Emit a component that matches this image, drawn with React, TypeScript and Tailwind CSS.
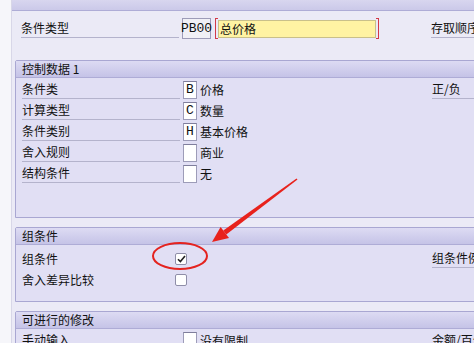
import React from "react";

const font = { fontFamily: '"Noto Sans CJK SC", "Noto Sans", sans-serif' };
const mono = { fontFamily: '"Liberation Mono", "DejaVu Sans Mono", monospace' };

function Label({ text, w = "w-[158px]", line = true }: { text: string; w?: string; line?: boolean }) {
  return (
    <div className={`${w} h-[18px] flex items-center shrink-0 ${line ? "border-b border-[#b4b3cc]" : ""}`}>
      <span className="text-[12px] leading-none text-[#111]">{text}</span>
    </div>
  );
}

function CharBox({ ch }: { ch?: string }) {
  return (
    <div
      className="ml-[3px] w-[14px] h-[18px] shrink-0 bg-white border border-[#9d9cb8] border-t-[#7f7e9c] flex items-center justify-center text-[13px] text-[#111]"
      style={mono}
    >
      {ch}
    </div>
  );
}

function RightLabel({ text }: { text: string }) {
  return (
    <div className="w-[60px] h-[18px] shrink-0 border-b border-[#b4b3cc] flex items-center overflow-hidden whitespace-nowrap">
      <span className="text-[12px] leading-none text-[#111]">{text}</span>
    </div>
  );
}

function Row({ label, ch, value, right }: { label: string; ch?: string; value?: string; right?: string }) {
  return (
    <div className="h-[21px] flex items-center">
      <Label text={label} />
      <CharBox ch={ch} />
      <div className="ml-[3px] w-[232px] shrink-0 text-[12px] leading-none text-[#111]">{value}</div>
      {right && <RightLabel text={right} />}
    </div>
  );
}

function CheckRow({ label, checked, right }: { label: string; checked?: boolean; right?: string }) {
  return (
    <div className="h-[21px] flex items-center">
      <Label text={label} w="w-[153px]" line={false} />
      <div className="w-[12px] h-[12px] shrink-0 bg-white border border-[#8f8ea8] rounded-[2px] flex items-center justify-center">
        {checked && (
          <svg width="9" height="8" viewBox="0 0 9 8">
            <path d="M1 4.2 L3.4 6.6 L8 1" fill="none" stroke="#222" strokeWidth="1.6" />
          </svg>
        )}
      </div>
      <div className="w-[245px] shrink-0" />
      {right && <RightLabel text={right} />}
    </div>
  );
}

function Section({ title, bodyH, children }: { title: string; bodyH: string; children: React.ReactNode }) {
  return (
    <div className="ml-[3px] w-[480px] border border-[#a9a7d2] rounded-tl-[2px]">
      <div className="h-[17px] border-b border-[#aeacd6] bg-gradient-to-b from-[#dddbf3] to-[#c5c3e7] flex items-center pl-[6px]">
        <span className="text-[12px] leading-none text-[#111]">{title}</span>
      </div>
      <div className={`${bodyH} bg-[#e1dff4] pl-[6px]`}>{children}</div>
    </div>
  );
}

export default function App() {
  return (
    <div className="w-[474px] h-[343px] overflow-hidden flex relative bg-white" style={font}>
      <div className="w-[12px] shrink-0 bg-[#f6f6fa] border-r border-[#d8d7e8]" />
      <div className="flex-1 min-w-0 bg-[#ebeaf6] overflow-hidden">
        <div className="h-[11px] bg-gradient-to-b from-[#d8d6ef] to-[#cbc9e9] border-b border-[#aeacd6]" />
        <div className="h-[49px] pt-[7px] pl-[9px]">
          <div className="h-[21px] w-[490px] flex items-center">
            <Label text="条件类型" />
            <div
              className="ml-[3px] w-[29px] h-[21px] shrink-0 bg-[#f0f0f6] border border-[#9d9cb8] flex items-center justify-center text-[13px] text-[#111]"
              style={mono}
            >
              PB00
            </div>
            <div className="ml-[4px] w-[3px] h-[21px] shrink-0 border border-r-0 border-[#d23a48]" />
            <div className="w-[158px] h-[18px] shrink-0 bg-[#fff3a3] border border-[#c9c08a] flex items-center pl-[1px] text-[12px] leading-none text-[#111]">
              总价格
            </div>
            <div className="w-[3px] h-[21px] shrink-0 border border-l-0 border-[#d23a48]" />
            <div className="w-[52px] shrink-0" />
            <RightLabel text="存取顺序" />
          </div>
        </div>

        <Section title="控制数据 1" bodyH="h-[139px] pt-[1px]">
          <Row label="条件类" ch="B" value="价格" right="正/负" />
          <Row label="计算类型" ch="C" value="数量" />
          <Row label="条件类别" ch="H" value="基本价格" />
          <Row label="舍入规则" value="商业" />
          <Row label="结构条件" value="无" />
        </Section>

        <div className="h-[9px]" />
        <Section title="组条件" bodyH="h-[56px] pt-[3px]">
          <CheckRow label="组条件" checked right="组条件例程" />
          <CheckRow label="舍入差异比较" />
        </Section>

        <div className="h-[9px]" />
        <Section title="可进行的修改" bodyH="h-[40px] pt-[1px]">
          <Row label="手动输入" value="没有限制" right="金额/百分比" />
        </Section>
      </div>

      <svg className="absolute left-0 top-0 pointer-events-none" width="474" height="343" viewBox="0 0 474 343">
        <ellipse cx="180" cy="256" rx="27" ry="13" fill="none" stroke="#e4231f" strokeWidth="2" />
        <polygon points="297.5,179.6 296.5,178.4 223.3,230.5 226.3,234.5" fill="#e8221c" />
        <polygon points="212,242 220.6,226.9 229,238" fill="#e8221c" />
      </svg>
    </div>
  );
}
